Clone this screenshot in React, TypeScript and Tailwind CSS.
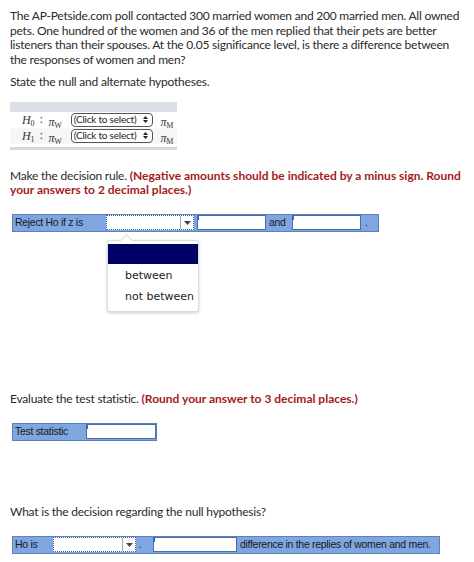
import React from "react";

const body = { fontFamily: "Lato, 'Open Sans', sans-serif", letterSpacing: "-0.22px" };
const cell = { fontFamily: "'Liberation Sans', Arial, sans-serif", letterSpacing: "-0.3px" };

function Caret() {
  return (
    <svg width="7" height="9" viewBox="0 0 7 9" className="ml-1.5">
      <path d="M1 4 L3.5 1 L6 4 Z M1 5 L3.5 8 L6 5 Z" fill="#222" />
    </svg>
  );
}

function Pi({ sub }: { sub: string }) {
  return (
    <span className="italic text-[12px] text-[#333]" style={{ fontFamily: "'Liberation Serif', serif" }}>
      π<sub className="text-[8px] not-italic">{sub}</sub>
    </span>
  );
}

function HypRow({ sub, alt }: { sub: string; alt?: boolean }) {
  return (
    <div className={`flex h-4 items-center ${alt ? "bg-[#f6f6f6]" : "bg-white"}`}>
      <span className="ml-3 w-[18px] italic text-[12px] text-[#333]" style={{ fontFamily: "'Liberation Serif', serif" }}>
        H<sub className="text-[8px] not-italic">{sub}</sub>
      </span>
      <span className="text-[11px] text-[#333]">:</span>
      <span className="ml-1.5 w-[22px]">
        <Pi sub="W" />
      </span>
      <div
        className="flex h-[14px] w-[82px] items-center justify-center rounded-[4px] border border-[#555] bg-white text-[10px] text-[#222]"
        style={{ fontFamily: "Lato, sans-serif" }}
      >
        (Click to select)
        <Caret />
      </div>
      <span className="ml-2">
        <Pi sub="M" />
      </span>
    </div>
  );
}

function DottedSelect({ w }: { w: string }) {
  return (
    <div className={`flex h-[15px] shrink-0 ${w} border border-dotted border-[#3d5f9a] bg-white`}>
      <div className="flex-1" />
      <div className="flex w-[13px] items-center justify-center border-l border-[#9ab]">
        <svg width="7" height="4" viewBox="0 0 7 4">
          <path d="M0 0 H7 L3.5 4 Z" fill="#444" />
        </svg>
      </div>
    </div>
  );
}

function Input({ w }: { w: string }) {
  return (
    <div className={`relative h-[15px] shrink-0 ${w} border border-[#4a6fa8] bg-white`}>
      <span className="absolute -left-px -top-px h-[5px] w-[2px] bg-[#3a64c8]" />
    </div>
  );
}

export default function App() {
  return (
    <div className="relative h-[562px] w-[474px] overflow-hidden bg-white text-[#2a2a2a]" style={body}>
      <div className="whitespace-nowrap px-[10px] pt-[9px] text-[12px] leading-[14.5px]">
        <p>
          The AP-Petside.com poll contacted 300 married women and 200 married men. All owned
          <br />
          pets. One hundred of the women and 36 of the men replied that their pets are better
          <br />
          listeners than their spouses. At the 0.05 significance level, is there a difference between
          <br />
          the responses of women and men?
        </p>
        <p className="mt-[8px]">State the null and alternate hypotheses.</p>
      </div>

      <div className="ml-[10px] mt-[12px] w-[167px]">
        <div className="h-[10px] bg-[#dcdfe8]" />
        <HypRow sub="0" />
        <HypRow sub="1" alt />
        <div className="mt-[3px] h-[3px] bg-[#d8d8dc]" />
      </div>

      <div className="whitespace-nowrap px-[10px] pt-[19px] text-[12px] leading-[14px]">
        <p>
          Make the decision rule.{" "}
          <span className="font-bold tracking-normal text-[#a31b22]">
            (Negative amounts should be indicated by a minus sign. Round
            <br />
            your answers to 2 decimal places.)
          </span>
        </p>
      </div>

      <div
        className="ml-[12px] mt-[17px] flex h-[18px] w-[367px] items-center border border-[#5d82bb] bg-[#7fa6e1] text-[10.5px] text-[#1a1a1a]"
        style={cell}
      >
        <span className="w-[93px] shrink-0 pl-[2px]">Reject Ho if z is</span>
        <DottedSelect w="w-[88px]" />
        <span className="w-[3px] shrink-0" />
        <Input w="w-[69px]" />
        <span className="w-[26px] shrink-0 pl-[3px]">and</span>
        <Input w="w-[69px]" />
        <span className="flex-1 pl-[4px] text-[10px]">.</span>
      </div>

      {/* open dropdown */}
      <div
        className="absolute left-[107px] top-[240px] w-[92px] rounded-[3px] border border-[#ddd] bg-white py-[3px] text-[11px] text-[#222] shadow-[0_1px_3px_rgba(0,0,0,0.2)]"
        style={{ fontFamily: "'DejaVu Sans', Verdana, sans-serif", letterSpacing: "0" }}
      >
        <span className="absolute -top-[5px] left-[14px] h-[9px] w-[9px] rotate-45 border-l border-t border-[#ddd] bg-white" />
        <div className="relative h-[20px] bg-[#000066]" />
        <div className="pl-[17px] pt-[3px] leading-[17px]">between</div>
        <div className="pb-[3px] pl-[17px] pt-[4px] leading-[17px]">not between</div>
      </div>

      <div className="px-[10px] pt-[160px] text-[12px] leading-[14px]">
        <p>
          Evaluate the test statistic.{" "}
          <span className="font-bold tracking-normal text-[#a31b22]">(Round your answer to 3 decimal places.)</span>
        </p>
      </div>

      <div
        className="ml-[12px] mt-[17px] flex h-[18px] w-[145px] items-center border border-[#5d82bb] bg-[#7fa6e1] text-[10.5px] text-[#1a1a1a]"
        style={cell}
      >
        <span className="w-[73px] shrink-0 pl-[2px]">Test statistic</span>
        <Input w="w-[70px]" />
      </div>

      <div className="px-[10px] pt-[64px] text-[12px] leading-[14px]">
        <p>What is the decision regarding the null hypothesis?</p>
      </div>

      <div
        className="ml-[12px] mt-[17px] flex h-[18px] w-[428px] items-center border border-[#5d82bb] bg-[#7fa6e1] text-[10.5px] text-[#1a1a1a]"
        style={cell}
      >
        <span className="w-[40px] shrink-0 pl-[2px]">Ho is</span>
        <DottedSelect w="w-[83px]" />
        <span className="w-[17px] shrink-0 pl-[3px] text-[10px]">.</span>
        <Input w="w-[84px]" />
        <span className="whitespace-nowrap pl-[3px]">difference in the replies of women and men.</span>
      </div>
    </div>
  );
}
